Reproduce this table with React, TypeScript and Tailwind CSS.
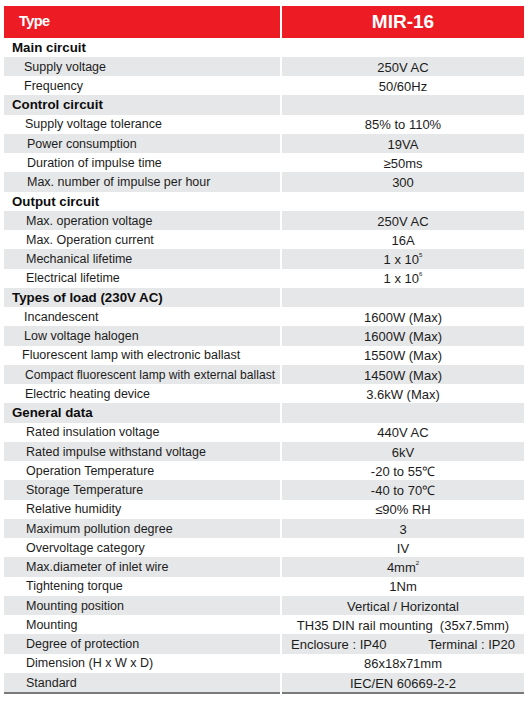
type Row =
  | { section: string }
  | { label: string; value: React.ReactNode; x: number; small?: boolean }

const rows: Row[] = [
  { section: "Main circuit" },
  { label: "Supply voltage", value: "250V AC", x: 24 },
  { label: "Frequency", value: "50/60Hz", x: 24 },
  { section: "Control circuit" },
  { label: "Supply voltage tolerance", value: "85% to 110%", x: 25 },
  { label: "Power consumption", value: "19VA", x: 27 },
  { label: "Duration of impulse time", value: "≥50ms", x: 27 },
  { label: "Max. number of impulse per hour", value: "300", x: 27 },
  { section: "Output circuit" },
  { label: "Max. operation voltage", value: "250V AC", x: 26 },
  { label: "Max. Operation current", value: "16A", x: 26 },
  {
    label: "Mechanical lifetime",
    value: (
      <>
        1 x 10<sup className="text-[6px] -top-[5px]">5</sup>
      </>
    ),
    x: 26,
  },
  {
    label: "Electrical lifetime",
    value: (
      <>
        1 x 10<sup className="text-[6px] -top-[5px]">6</sup>
      </>
    ),
    x: 26,
  },
  { section: "Types of load (230V AC)" },
  { label: "Incandescent", value: "1600W (Max)", x: 24 },
  { label: "Low voltage halogen", value: "1600W (Max)", x: 24 },
  { label: "Fluorescent lamp with electronic ballast", value: "1550W (Max)", x: 22 },
  { label: "Compact fluorescent lamp with external ballast", value: "1450W (Max)", x: 25, small: true },
  { label: "Electric heating device", value: "3.6kW (Max)", x: 25 },
  { section: "General data" },
  { label: "Rated insulation voltage", value: "440V AC", x: 26 },
  { label: "Rated impulse withstand voltage", value: "6kV", x: 26 },
  { label: "Operation Temperature", value: "-20 to 55℃", x: 26 },
  { label: "Storage Temperature", value: "-40 to 70℃", x: 26 },
  { label: "Relative humidity", value: "≤90% RH", x: 26 },
  { label: "Maximum pollution degree", value: "3", x: 26 },
  { label: "Overvoltage category", value: "IV", x: 26 },
  {
    label: "Max.diameter of inlet wire",
    value: (
      <>
        4mm<sup className="text-[6px] -top-[5px]">2</sup>
      </>
    ),
    x: 26,
  },
  { label: "Tightening torque", value: "1Nm", x: 26 },
  { label: "Mounting position", value: "Vertical / Horizontal", x: 26 },
  { label: "Mounting", value: "TH35 DIN rail mounting\u00a0\u00a0(35x7.5mm)", x: 26 },
  {
    label: "Degree of protection",
    value: (
      <span className="flex w-full justify-between px-[9px]">
        <span>Enclosure : IP40</span>
        <span>Terminal : IP20</span>
      </span>
    ),
    x: 26,
  },
  { label: "Dimension (H x W x D)", value: "86x18x71mm", x: 26 },
  { label: "Standard", value: "IEC/EN 60669-2-2", x: 26 },
]

export default function App() {
  return (
    <div
      className="w-[530px] h-[701px] bg-white pl-[4px] pt-[6px]"
      style={{ fontFamily: '"Liberation Sans", Arial, sans-serif' }}
    >
      <div className="grid grid-cols-[276px_242px] gap-x-[2px]">
        <div className="h-[31.5px] bg-[#ed1c24] flex items-center pl-[15px] text-white font-bold text-[14.5px] tracking-[-0.6px]">
          Type
        </div>
        <div className="h-[31.5px] bg-[#ed1c24] flex items-center justify-center text-white font-bold text-[19px]">
          MIR-16
        </div>

        {rows.map((r, i) => {
          const bg = i % 2 === 1 ? "bg-[#e6e7e8]" : "bg-white"
          if ("section" in r) {
            return [
              <div
                key={i + "a"}
                className={`${bg} h-[19.25px] flex items-center pl-[8px] pt-[1px] font-bold text-[13.3px] text-[#0d0d0d]`}
              >
                {r.section}
              </div>,
              <div key={i + "b"} className={`${bg} h-[19.25px]`} />,
            ]
          }
          return [
            <div
              key={i + "a"}
              className={`${bg} h-[19.25px] flex items-center pt-[1px] ${r.small ? "text-[12.1px]" : "text-[12.5px]"} text-[#1c1c1c] whitespace-nowrap`}
              style={{ paddingLeft: r.x - 4 }}
            >
              {r.label}
            </div>,
            <div
              key={i + "b"}
              className={`${bg} h-[19.25px] flex items-center justify-center pt-[2px] text-[13px] text-[#1c1c1c] whitespace-nowrap`}
            >
              {r.value}
            </div>,
          ]
        })}

        <div className="h-[2px] bg-[#7a7a7a]" />
        <div className="h-[2px] bg-[#7a7a7a]" />
      </div>
    </div>
  )
}
